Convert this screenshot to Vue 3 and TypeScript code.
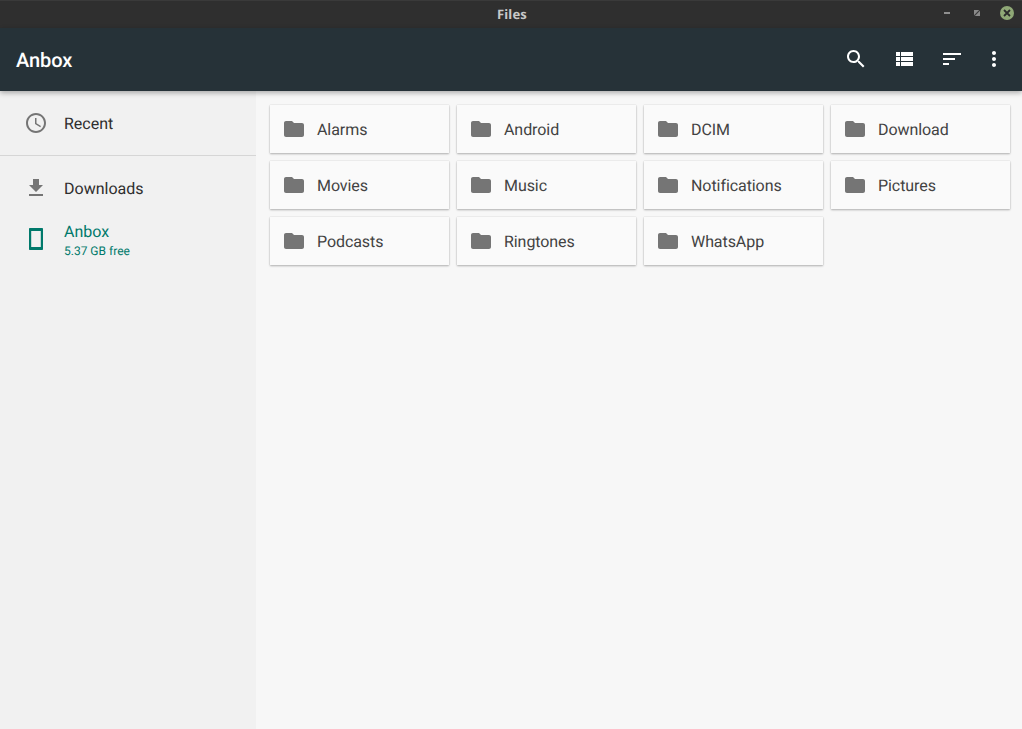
<script setup lang="ts">
const folders: string[] = ['Alarms','Android','DCIM','Download','Movies','Music','Notifications','Pictures','Podcasts','Ringtones','WhatsApp']
</script>

<template>
  <div class="window">
    <header class="titlebar">
      <span class="title">Files</span>
      <div class="controls">
        <span class="min"></span>
        <svg class="max" width="6" height="6" viewBox="0 0 6 6"><rect width="6" height="6" fill="#8a8a8a"/><path d="M0 6 6 0" stroke="#3a3a3a" stroke-width="1.2" fill="none"/></svg>
        <span class="close">
          <svg width="14" height="14" viewBox="0 0 14 14"><path d="M4 4 10 10M10 4 4 10" stroke="#2b2b2b" stroke-width="1.8" fill="none"/></svg>
        </span>
      </div>
    </header>
    <div class="toolbar">
      <span class="appname">Anbox</span>
      <div class="actions">
        <svg class="ic" viewBox="0 0 24 24"><path fill="#fff" d="M15.5 14h-.79l-.28-.27C15.41 12.59 16 11.11 16 9.5 16 5.91 13.09 3 9.5 3S3 5.91 3 9.5 5.91 16 9.5 16c1.61 0 3.09-.59 4.23-1.57l.27.28v.79l5 4.99L20.49 19l-4.99-5zm-6 0C7.01 14 5 11.99 5 9.5S7.01 5 9.5 5 14 7.01 14 9.5 11.99 14 9.5 14z"/></svg>
        <svg class="ic" viewBox="0 0 24 24"><path fill="#fff" d="M4 14h4v-4H4v4zm0 5h4v-4H4v4zM4 9h4V5H4v4zm5 5h12v-4H9v4zm0 5h12v-4H9v4zM9 5v4h12V5H9z"/></svg>
        <svg class="ic" viewBox="0 0 24 24"><path fill="#fff" d="M3 18h6v-2H3v2zM3 6v2h18V6H3zm0 7h12v-2H3v2z"/></svg>
        <svg class="ic more" viewBox="0 0 24 24"><path fill="#fff" d="M12 8c1.1 0 2-.9 2-2s-.9-2-2-2-2 .9-2 2 .9 2 2 2zm0 2c-1.1 0-2 .9-2 2s.9 2 2 2 2-.9 2-2-.9-2-2-2zm0 6c-1.1 0-2 .9-2 2s.9 2 2 2 2-.9 2-2-.9-2-2-2z"/></svg>
      </div>
    </div>
    <div class="body">
      <aside class="sidebar">
        <div class="nav recent">
          <svg class="ic" viewBox="0 0 24 24"><path fill="#757575" d="M11.99 2C6.47 2 2 6.48 2 12s4.47 10 9.99 10C17.52 22 22 17.52 22 12S17.52 2 11.99 2zM12 20c-4.42 0-8-3.58-8-8s3.58-8 8-8 8 3.58 8 8-3.58 8-8 8zm.5-13H11v6l5.25 3.15.75-1.23-4.5-2.67z"/></svg>
          <span class="label">Recent</span>
        </div>
        <div class="divider"></div>
        <div class="nav downloads">
          <svg class="ic" viewBox="0 0 24 24"><path fill="#757575" d="M19 9h-4V3H9v6H5l7 7 7-7zM5 18v2h14v-2H5z"/></svg>
          <span class="label">Downloads</span>
        </div>
        <div class="nav active">
          <svg class="ic" viewBox="0 0 24 24"><path fill="#00796b" fill-rule="evenodd" d="M6 1H18c.6 0 1 .4 1 1V22c0 .6-.4 1-1 1H6c-.6 0-1-.4-1-1V2c0-.6.4-1 1-1zM7.2 4V20H16.8V4z"/></svg>
          <div class="stack">
            <span class="label">Anbox</span>
            <span class="sub">5.37 GB free</span>
          </div>
        </div>
      </aside>
      <main class="grid">
        <div v-for="f in folders" :key="f" class="card">
          <svg class="ic" viewBox="0 0 24 24"><path fill="#757575" d="M10 4H4c-1.1 0-2 .9-2 2v12c0 1.1.9 2 2 2h16c1.1 0 2-.9 2-2V8c0-1.1-.9-2-2-2h-8l-2-2z"/></svg>
          <span class="name">{{ f }}</span>
        </div>
      </main>
    </div>
  </div>
</template>

<style>
html, body { margin: 0; height: 100%; overflow: hidden; }
</style>

<style scoped>
.window {
  width: 1022px;
  height: 729px;
  display: flex;
  flex-direction: column;
  font-family: Roboto, "Liberation Sans", sans-serif;
  text-rendering: geometricPrecision;
  background: #f7f7f7;
  overflow: hidden;
}
.titlebar {
  height: 28px;
  flex: none;
  background: #2f2f2f;
  border-top: 1px solid #3a3a3a;
  box-sizing: border-box;
  display: flex;
  align-items: center;
  justify-content: center;
  position: relative;
}
.title {
  font-family: "Noto Sans", "DejaVu Sans", sans-serif;
  font-weight: 700;
  font-size: 13px;
  letter-spacing: .2px;
  color: #c8c8c8;
  margin: -2px 0 0 2px;
}
.controls {
  position: absolute;
  right: 8px;
  top: 5px;
  display: flex;
  align-items: center;
  height: 14px;
}
.min { width: 6px; height: 2px; background: #8f8f8f; margin-right: 24px; }
.max { display: block; width: 6px; height: 6px; margin-right: 20px; }
.close {
  width: 14px;
  height: 14px;
  border-radius: 50%;
  background: #8fa876;
  display: flex;
}
.toolbar {
  height: 63px;
  flex: none;
  background: #263238;
  display: flex;
  align-items: center;
  justify-content: space-between;
  padding: 0 16px;
  position: relative;
  z-index: 2;
  box-shadow: 0 2px 5px rgba(0, 0, 0, .3);
}
.appname { font-size: 20px; font-weight: 500; color: #fff; letter-spacing: -.1px; }
.actions { display: flex; gap: 24px; margin-bottom: 1px; }
.more { margin-left: -6px; }
.ic { width: 24px; height: 24px; flex: none; display: block; }
.body { flex: 1; display: flex; min-height: 0; }
.sidebar {
  width: 256px;
  flex: none;
  background: #f1f1f1;
  box-sizing: border-box;
}
.nav {
  display: flex;
  align-items: center;
  padding-left: 24px;
  gap: 16px;
}
.recent { height: 64px; }
.divider { height: 1px; background: #d6d6d6; }
.downloads { height: 64px; }
.active { height: 42px; margin-top: -2px; }
.label { font-size: 16px; color: #2e2e2e; }
.stack { display: flex; flex-direction: column; margin-top: 2px; }
.active .label { color: #00796b; line-height: 20px; }
.sub { font-size: 12px; color: #00796b; line-height: 16px; margin-top: 1px; }
.grid {
  flex: 1;
  display: grid;
  grid-template-columns: repeat(4, 179px);
  grid-auto-rows: 48px;
  gap: 8px;
  padding: 14px 0 0 14px;
  align-content: start;
}
.card {
  background: #fafafa;
  box-shadow: 0 1px 2px rgba(0, 0, 0, .28), 0 0 1px rgba(0, 0, 0, .18);
  display: flex;
  align-items: center;
  padding-left: 12px;
  gap: 11px;
}
.name { font-size: 16px; color: #424242; letter-spacing: -.07px; }
</style>
